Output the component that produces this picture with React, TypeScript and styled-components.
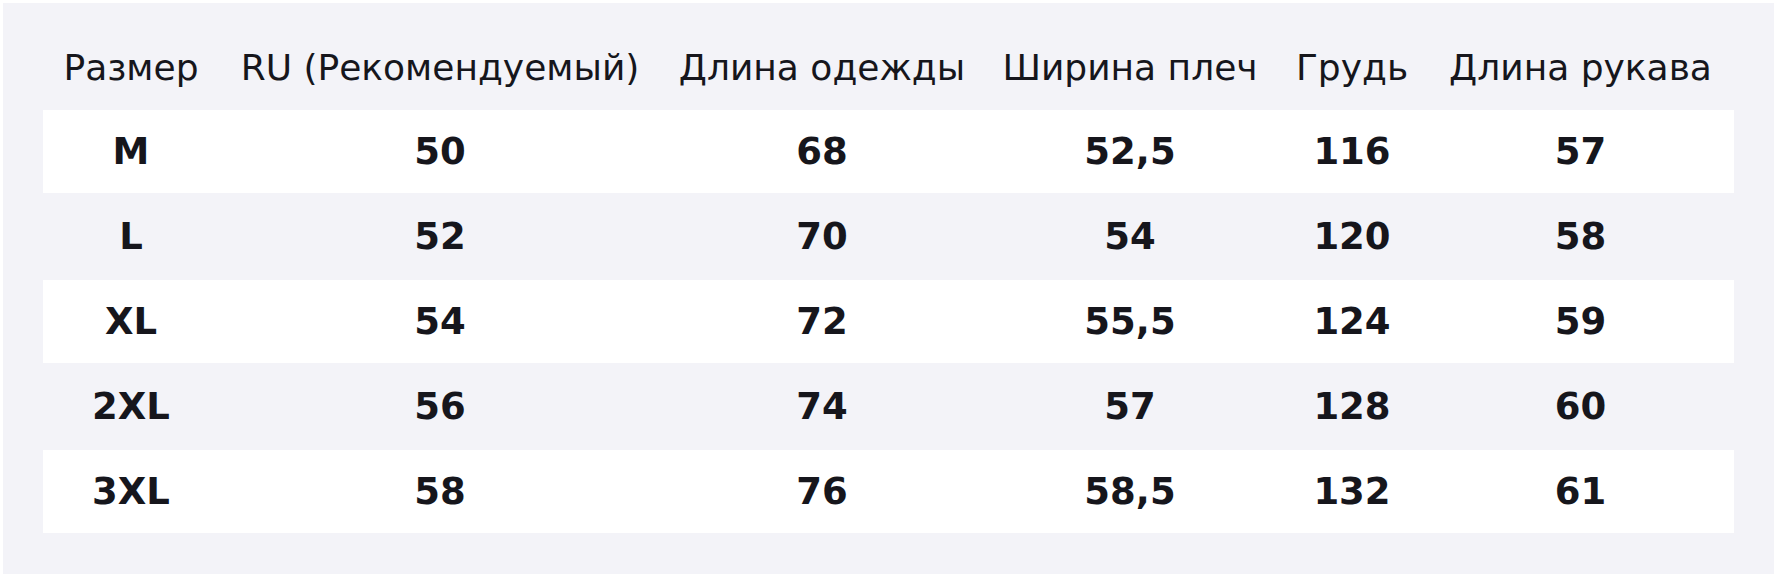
import React from 'react';
import styled, { createGlobalStyle } from 'styled-components';

const GlobalStyle = createGlobalStyle`
  body {
    margin: 3px;
    background: #ffffff;
    font-family: 'DejaVu Sans', 'Liberation Sans', sans-serif;
  }
`;

const Panel = styled.div`
  background: #f3f3f8;
  padding: 38px 40px 39px;
  width: 1771px;
  box-sizing: border-box;
`;

const Table = styled.table`
  width: 100%;
  table-layout: fixed;
  border-collapse: separate;
  border-spacing: 0 2px;
  color: #16161c;
`;

const HeadCell = styled.th`
  font-size: 36px;
  font-weight: 400;
  white-space: nowrap;
  text-align: center;
  height: 42px;
  padding: 3px 0 20px;
  vertical-align: middle;
`;

const Row = styled.tr<{ $striped: boolean }>`
  background: ${p => (p.$striped ? '#ffffff' : 'transparent')};
`;

const Cell = styled.td`
  font-size: 37px;
  font-weight: 700;
  text-align: center;
  height: 83px;
  padding: 0;
  vertical-align: middle;
`;

const columns = [176, 442, 322, 294, 150, 307];

const headers = [
  'Размер',
  'RU (Рекомендуемый)',
  'Длина одежды',
  'Ширина плеч',
  'Грудь',
  'Длина рукава',
];

const rows = [
  ['M', '50', '68', '52,5', '116', '57'],
  ['L', '52', '70', '54', '120', '58'],
  ['XL', '54', '72', '55,5', '124', '59'],
  ['2XL', '56', '74', '57', '128', '60'],
  ['3XL', '58', '76', '58,5', '132', '61'],
];

const App: React.FC = () => {
  return (
    <>
      <GlobalStyle />
      <Panel>
        <Table>
          <colgroup>
            {columns.map((w, i) => (
              <col key={i} style={{ width: w }} />
            ))}
          </colgroup>
          <thead>
            <tr>
              {headers.map(h => (
                <HeadCell key={h}>{h}</HeadCell>
              ))}
            </tr>
          </thead>
          <tbody>
            {rows.map((r, i) => (
              <Row key={r[0]} $striped={i % 2 === 0}>
                {r.map((v, j) => (
                  <Cell key={j}>{v}</Cell>
                ))}
              </Row>
            ))}
          </tbody>
        </Table>
      </Panel>
    </>
  );
};

export default App;
